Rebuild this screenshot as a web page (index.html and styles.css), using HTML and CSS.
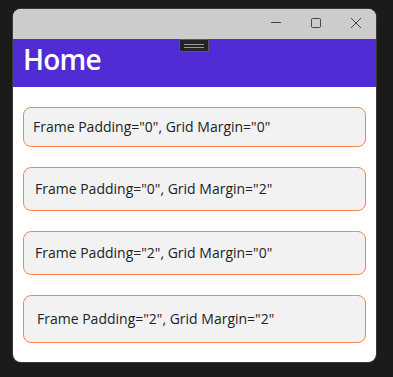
FILE: index.html
```html
<!DOCTYPE html>
<html>
<head>
<meta charset="utf-8">
<link rel="stylesheet" href="styles.css">
</head>
<body>
<div class="window">
  <div class="titlebar">
    <div class="controls">
      <svg class="ctl" width="40" height="30" viewBox="0 0 40 30"><path d="M15 13.5h10" stroke="#444" stroke-width="1"/></svg>
      <svg class="ctl" width="40" height="30" viewBox="0 0 40 30"><rect x="15.5" y="9.5" width="9" height="9" rx="1" fill="none" stroke="#444" stroke-width="1"/></svg>
      <svg class="ctl" width="40" height="30" viewBox="0 0 40 30"><path d="M15 9l10 10M25 9l-10 10" stroke="#444" stroke-width="1"/></svg>
    </div>
  </div>
  <div class="header">
    <h1 class="title">Home</h1>
    <div class="grip"><span></span><span></span></div>
  </div>
  <div class="content">
    <div class="frame f1">Frame Padding="0", Grid Margin="0"</div>
    <div class="frame f2">Frame Padding="0", Grid Margin="2"</div>
    <div class="frame f2">Frame Padding="2", Grid Margin="0"</div>
    <div class="frame f3">Frame Padding="2", Grid Margin="2"</div>
  </div>
</div>
</body>
</html>
```
FILE: styles.css
```css
html, body {
  margin: 0;
  padding: 0;
}
body {
  background: #1b1b1b;
  width: 393px;
  height: 377px;
  overflow: hidden;
  font-family: "Open Sans", "Noto Sans", sans-serif;
}
.window {
  position: relative;
  margin: 9px 0 0 13px;
  width: 363px;
  height: 353px;
  background: #ffffff;
  border-radius: 8px;
  overflow: hidden;
  box-shadow: 0 0 0 1px #3a3a3a;
}
.titlebar {
  height: 30px;
  background: #cccccc;
  display: flex;
  justify-content: flex-end;
}
.controls {
  display: flex;
}
.ctl {
  display: block;
}
.header {
  position: relative;
  height: 48px;
  background: #512bd4;
  display: flex;
  align-items: flex-start;
  padding-left: 10px;
}
.title {
  margin: 0;
  color: #ffffff;
  font-family: "Open Sans", sans-serif;
  font-weight: 600;
  font-size: 28px;
  line-height: 40px;
  letter-spacing: -0.8px;
}
.grip {
  position: absolute;
  left: 166px;
  top: 0;
  width: 28px;
  height: 11px;
  background: #242424;
  border: 1px solid #5a5a5a;
  display: flex;
  flex-direction: column;
  align-items: center;
  justify-content: center;
  gap: 2px;
}
.grip span {
  display: block;
  width: 20px;
  height: 1px;
  background: #9a9a9a;
}
.content {
  display: flex;
  flex-direction: column;
  gap: 20px;
  padding: 20px 10px;
}
.frame {
  border: 1px solid #fa8355;
  border-radius: 8px;
  background: #f2f2f2;
  color: #222222;
  font-size: 14px;
  line-height: 20px;
}
.f1 { padding: 9px 9px; }
.f2 { padding: 11px 11px; }
.f3 { padding: 13px 13px; }
```
